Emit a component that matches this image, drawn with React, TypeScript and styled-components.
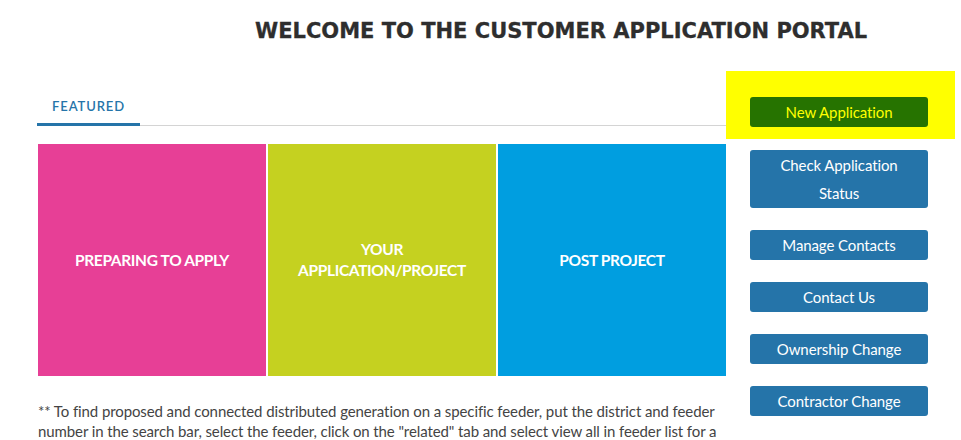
import React from "react";
import styled, { createGlobalStyle } from "styled-components";

const Global = createGlobalStyle`
  html, body { margin: 0; padding: 0; background: #fff; }
  body { font-family: Lato, "Open Sans", sans-serif; overflow: hidden; }
`;

const Page = styled.div`
  width: 961px;
  height: 440px;
  overflow: hidden;
`;

const Title = styled.h1`
  margin: 0;
  padding: 18px 0 0 255px;
  height: 52px;
  box-sizing: border-box;
  font-family: "DejaVu Sans", sans-serif;
  font-weight: 700;
  font-size: 21px;
  line-height: 27px;
  color: #2e2e2e;
  letter-spacing: 0px;
  white-space: nowrap;
  -webkit-text-stroke: 0.3px #2e2e2e;
`;

const Main = styled.div`
  display: flex;
  align-items: flex-start;
`;

const Left = styled.div`
  margin-left: 38px;
  width: 688px;
  padding-top: 43px;
`;

const TabBar = styled.div`
  display: flex;
  border-bottom: 1px solid #d4d4d4;
`;

const Tab = styled.div`
  padding: 0 15px;
  margin-left: -1px;
  height: 31px;
  line-height: 22px;
  font-size: 13px;
  letter-spacing: 0.9px;
  color: #2574a9;
  border-bottom: 3px solid #2574a9;
  margin-bottom: -1px;
  box-sizing: border-box;
  font-weight: 600;
`;

const Tiles = styled.div`
  margin-top: 18px;
  display: grid;
  grid-template-columns: 228px 228px 228px;
  gap: 2px;
`;

const Tile = styled.div<{ $bg: string }>`
  background: ${(p) => p.$bg};
  height: 232px;
  display: flex;
  align-items: center;
  justify-content: center;
  text-align: center;
  color: #fff;
  font-weight: 700;
  font-size: 15.5px;
  line-height: 21px;
  letter-spacing: -0.35px;
  padding: 0 20px;
`;

const Note = styled.p`
  margin: 25px 0 0 0;
  font-size: 15px;
  line-height: 20px;
  color: #444;
  letter-spacing: -0.1px;
  width: 690px;
`;

const Right = styled.div`
  width: 235px;
  padding-top: 19px;
  display: flex;
  flex-direction: column;
`;

const Highlight = styled.div`
  background: #ffff00;
  width: 229px;
  height: 68px;
  padding: 26px 0 0 24px;
  box-sizing: border-box;
`;

const Buttons = styled.div`
  display: flex;
  flex-direction: column;
  gap: 22px;
  padding: 11px 0 0 24px;
`;

const Button = styled.div<{ $variant?: "new" }>`
  width: 178px;
  min-height: 30px;
  box-sizing: border-box;
  border-radius: 3px;
  background: ${(p) => (p.$variant === "new" ? "#267300" : "#2574a9")};
  color: ${(p) => (p.$variant === "new" ? "#ffff00" : "#fff")};
  font-size: 15px;
  line-height: 28px;
  text-align: center;
  padding: 1px 16px;
  letter-spacing: -0.1px;
`;

export default function App() {
  return (
    <Page>
      <Global />
      <Title>WELCOME TO THE CUSTOMER APPLICATION PORTAL</Title>
      <Main>
        <Left>
          <TabBar>
            <Tab>FEATURED</Tab>
          </TabBar>
          <Tiles>
            <Tile $bg="#e73f96">PREPARING TO APPLY</Tile>
            <Tile $bg="#c5d120">YOUR APPLICATION/PROJECT</Tile>
            <Tile $bg="#009ee0">POST PROJECT</Tile>
          </Tiles>
          <Note>
            ** To find proposed and connected distributed generation on a specific feeder, put the district and feeder
            number in the search bar, select the feeder, click on the "related" tab and select view all in feeder list for a
            specific feeder.
          </Note>
        </Left>
        <Right>
          <Highlight>
            <Button $variant="new">New Application</Button>
          </Highlight>
          <Buttons>
            <Button>Check Application Status</Button>
            <Button>Manage Contacts</Button>
            <Button>Contact Us</Button>
            <Button>Ownership Change</Button>
            <Button>Contractor Change</Button>
          </Buttons>
        </Right>
      </Main>
    </Page>
  );
}
